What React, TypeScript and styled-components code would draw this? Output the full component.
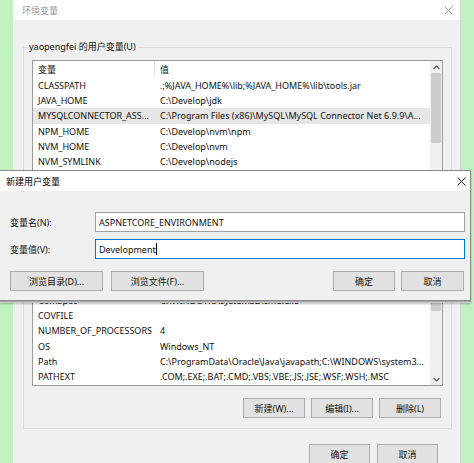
import React from "react";
import styled, { createGlobalStyle } from "styled-components";

const Global = createGlobalStyle`
  html, body { margin: 0; padding: 0; }
  body {
    background: #bff2bf;
    font-family: "Noto Sans", "Noto Sans CJK SC", sans-serif;
    font-size: 9px;
    color: #111;
  }
`;

const Page = styled.div`
  position: relative;
  width: 474px;
  height: 463px;
  overflow: hidden;
  padding-left: 13px;
  box-sizing: border-box;
  background: #bff2bf;
`;

const Window = styled.div`
  width: 447px;
  height: 490px;
  background: #f0f0f0;
  box-shadow: 1px 0 0 #d4d4d4;
  display: flex;
  flex-direction: column;
`;

const TitleBar = styled.div<{ $h: number; $pl: number; $pr: number; $dim?: boolean }>`
  height: ${(p) => p.$h}px;
  flex: none;
  background: #fff;
  display: flex;
  align-items: center;
  justify-content: space-between;
  padding: 0 ${(p) => p.$pr}px 0 ${(p) => p.$pl}px;
  color: ${(p) => (p.$dim ? "#9a9a9a" : "#000")};
  font-size: 9px;
`;

const Body = styled.div`
  padding-top: 19px;
  display: flex;
  flex-direction: column;
`;

const Group = styled.fieldset<{ $pt: number; $mt: number }>`
  margin: ${(p) => p.$mt}px 8px 0 10px;
  padding: ${(p) => p.$pt}px 8px 10px 8px;
  border: 1px solid #dcdcdc;
  min-width: 0;
  display: flex;
  flex-direction: column;
`;

const Legend = styled.legend`
  padding: 0 2px;
  margin-left: -5px;
  line-height: 16px;
  color: #111;
`;

const ListBox = styled.div<{ $h: number }>`
  width: 411px;
  height: ${(p) => p.$h}px;
  box-sizing: border-box;
  border: 1px solid #9c9c9c;
  background: #fff;
  display: flex;
  overflow: hidden;
`;

const ListContent = styled.div`
  flex: 1;
  min-width: 0;
  overflow: hidden;
`;

const Row = styled.div<{ $header?: boolean; $sel?: boolean }>`
  display: grid;
  grid-template-columns: 122px 1fr;
  height: ${(p) => (p.$header ? "17px" : "15.2px")};
  background: ${(p) => (p.$sel ? "#e6e6e6" : "transparent")};
  white-space: nowrap;
`;

const Cell = styled.div<{ $divider?: boolean }>`
  padding-left: 5px;
  display: flex;
  align-items: center;
  overflow: hidden;
  border-right: ${(p) => (p.$divider ? "1px solid #e5e5e5" : "none")};
`;

const ScrollBar = styled.div`
  width: 12px;
  flex: none;
  display: flex;
  flex-direction: column;
  background: #f0f0f0;
`;

const Arrow = styled.div`
  height: 12px;
  flex: none;
  display: flex;
  align-items: center;
  justify-content: center;
`;

const Thumb = styled.div<{ $h: number }>`
  height: ${(p) => p.$h}px;
  flex: none;
  margin: 0 1px;
  background: #cdcdcd;
`;

const Track = styled.div`
  flex: 1;
`;

const ButtonRow = styled.div<{ $mt: number; $pr: number }>`
  margin-top: ${(p) => p.$mt}px;
  padding-right: ${(p) => p.$pr}px;
  display: flex;
  justify-content: flex-end;
  gap: 6px;
`;

const Button = styled.button<{ $w: number }>`
  width: ${(p) => p.$w}px;
  height: 20px;
  box-sizing: border-box;
  padding: 0;
  background: #e1e1e1;
  border: 1px solid #adadad;
  font: inherit;
  font-size: 9px;
  color: #111;
`;

const FooterRow = styled.div`
  margin-top: 15px;
  padding-right: 22px;
  display: flex;
  justify-content: flex-end;
  gap: 7px;
`;

const Dialog = styled.div`
  position: absolute;
  left: 0;
  top: 170px;
  width: 471px;
  height: 131px;
  box-sizing: border-box;
  background: #f0f0f0;
  border: 1px solid #8a8a8a;
  border-left: none;
  box-shadow: 0 1px 0 #a9a9a9, 0 2px 0 #c8c8c8, 0 3px 2px rgba(0, 0, 0, 0.25);
  display: flex;
  flex-direction: column;
`;

const DialogBody = styled.div`
  padding: 21px 5px 8px 10px;
  display: flex;
  flex-direction: column;
`;

const Form = styled.div`
  display: grid;
  grid-template-columns: 85px 1fr;
  row-gap: 7px;
  align-items: center;
`;

const Label = styled.div`
  color: #111;
`;

const TextBox = styled.div<{ $focus?: boolean }>`
  height: 20px;
  box-sizing: border-box;
  background: #fff;
  border: 1px solid ${(p) => (p.$focus ? "#0078d7" : "#a0a0a0")};
  padding-left: 3px;
  display: flex;
  align-items: center;
  color: #111;
  white-space: nowrap;
`;

const Caret = styled.span`
  display: inline-block;
  width: 1px;
  height: 12px;
  background: #000;
`;

const DialogButtons = styled.div`
  margin-top: 12px;
  padding-right: 1px;
  display: flex;
  justify-content: space-between;
`;

const ButtonGroup = styled.div<{ $gap: number }>`
  display: flex;
  gap: ${(p) => p.$gap}px;
`;

const CloseIcon = ({ color }: { color: string }) => (
  <svg width="9" height="9" viewBox="0 0 9 9">
    <path d="M0.5 0.5 L8.5 8.5 M8.5 0.5 L0.5 8.5" stroke={color} strokeWidth="1" fill="none" />
  </svg>
);

const Chevron = ({ up }: { up?: boolean }) => (
  <svg width="7" height="5" viewBox="0 0 7 5">
    <path d={up ? "M0.5 4 L3.5 1 L6.5 4" : "M0.5 1 L3.5 4 L6.5 1"} stroke="#606060" strokeWidth="1.2" fill="none" />
  </svg>
);

type Item = { name: string; value: string; sel?: boolean };

const userVars: Item[] = [
  { name: "CLASSPATH", value: ".;%JAVA_HOME%\\lib;%JAVA_HOME%\\lib\\tools.jar" },
  { name: "JAVA_HOME", value: "C:\\Develop\\jdk" },
  {
    name: "MYSQLCONNECTOR_ASS...",
    value: "C:\\Program Files (x86)\\MySQL\\MySQL Connector Net 6.9.9\\A...",
    sel: true,
  },
  { name: "NPM_HOME", value: "C:\\Develop\\nvm\\npm" },
  { name: "NVM_HOME", value: "C:\\Develop\\nvm" },
  { name: "NVM_SYMLINK", value: "C:\\Develop\\nodejs" },
  { name: "OneDrive", value: "C:\\Users\\yaopengfei\\OneDrive" },
  { name: "Path", value: "C:\\Users\\yaopengfei\\AppData\\Local\\Microsoft\\WindowsApps;..." },
  { name: "TEMP", value: "%USERPROFILE%\\AppData\\Local\\Temp" },
];

const systemVars: Item[] = [
  { name: "ComSpec", value: "C:\\WINDOWS\\system32\\cmd.exe" },
  { name: "COVFILE", value: "" },
  { name: "NUMBER_OF_PROCESSORS", value: "4" },
  { name: "OS", value: "Windows_NT" },
  { name: "Path", value: "C:\\ProgramData\\Oracle\\Java\\javapath;C:\\WINDOWS\\system3..." },
  { name: "PATHEXT", value: ".COM;.EXE;.BAT;.CMD;.VBS;.VBE;.JS;.JSE;.WSF;.WSH;.MSC" },
  { name: "PROCESSOR_ARCHITECTURE", value: "AMD64" },
];

const VarList = ({ items, height, thumb }: { items: Item[]; height: number; thumb: number }) => (
  <ListBox $h={height}>
    <ListContent>
      <Row $header>
        <Cell $divider>变量</Cell>
        <Cell>值</Cell>
      </Row>
      {items.map((it) => (
        <Row key={it.name} $sel={it.sel}>
          <Cell>{it.name}</Cell>
          <Cell>{it.value}</Cell>
        </Row>
      ))}
    </ListContent>
    <ScrollBar>
      <Arrow>
        <Chevron up />
      </Arrow>
      <Thumb $h={thumb} />
      <Track />
      <Arrow>
        <Chevron />
      </Arrow>
    </ScrollBar>
  </ListBox>
);

export default function App() {
  return (
    <Page>
      <Global />
      <Window>
        <TitleBar $h={20} $pl={9} $pr={7} $dim>
          <span>环境变量</span>
          <CloseIcon color="#9a9a9a" />
        </TitleBar>
        <Body>
          <Group $pt={5} $mt={0}>
            <Legend>yaopengfei 的用户变量(U)</Legend>
            <VarList items={userVars} height={142} thumb={70} />
            <ButtonRow $mt={13} $pr={2}>
              <Button $w={62}>新建(N)...</Button>
              <Button $w={62}>编辑(E)...</Button>
              <Button $w={62}>删除(D)</Button>
            </ButtonRow>
          </Group>
          <Group $pt={4} $mt={9}>
            <Legend>系统变量(S)</Legend>
            <VarList items={systemVars} height={111} thumb={23} />
            <ButtonRow $mt={12} $pr={2}>
              <Button $w={62}>新建(W)...</Button>
              <Button $w={62}>编辑(I)...</Button>
              <Button $w={62}>删除(L)</Button>
            </ButtonRow>
          </Group>
          <FooterRow>
            <Button $w={61}>确定</Button>
            <Button $w={61}>取消</Button>
          </FooterRow>
        </Body>
      </Window>

      <Dialog>
        <TitleBar $h={20} $pl={6} $pr={4}>
          <span>新建用户变量</span>
          <CloseIcon color="#222" />
        </TitleBar>
        <DialogBody>
          <Form>
            <Label>变量名(N):</Label>
            <TextBox>ASPNETCORE_ENVIRONMENT</TextBox>
            <Label>变量值(V):</Label>
            <TextBox $focus>
              Development
              <Caret />
            </TextBox>
          </Form>
          <DialogButtons>
            <ButtonGroup $gap={8}>
              <Button $w={93}>浏览目录(D)...</Button>
              <Button $w={93}>浏览文件(F)...</Button>
            </ButtonGroup>
            <ButtonGroup $gap={6}>
              <Button $w={62}>确定</Button>
              <Button $w={63}>取消</Button>
            </ButtonGroup>
          </DialogButtons>
        </DialogBody>
      </Dialog>
    </Page>
  );
}
